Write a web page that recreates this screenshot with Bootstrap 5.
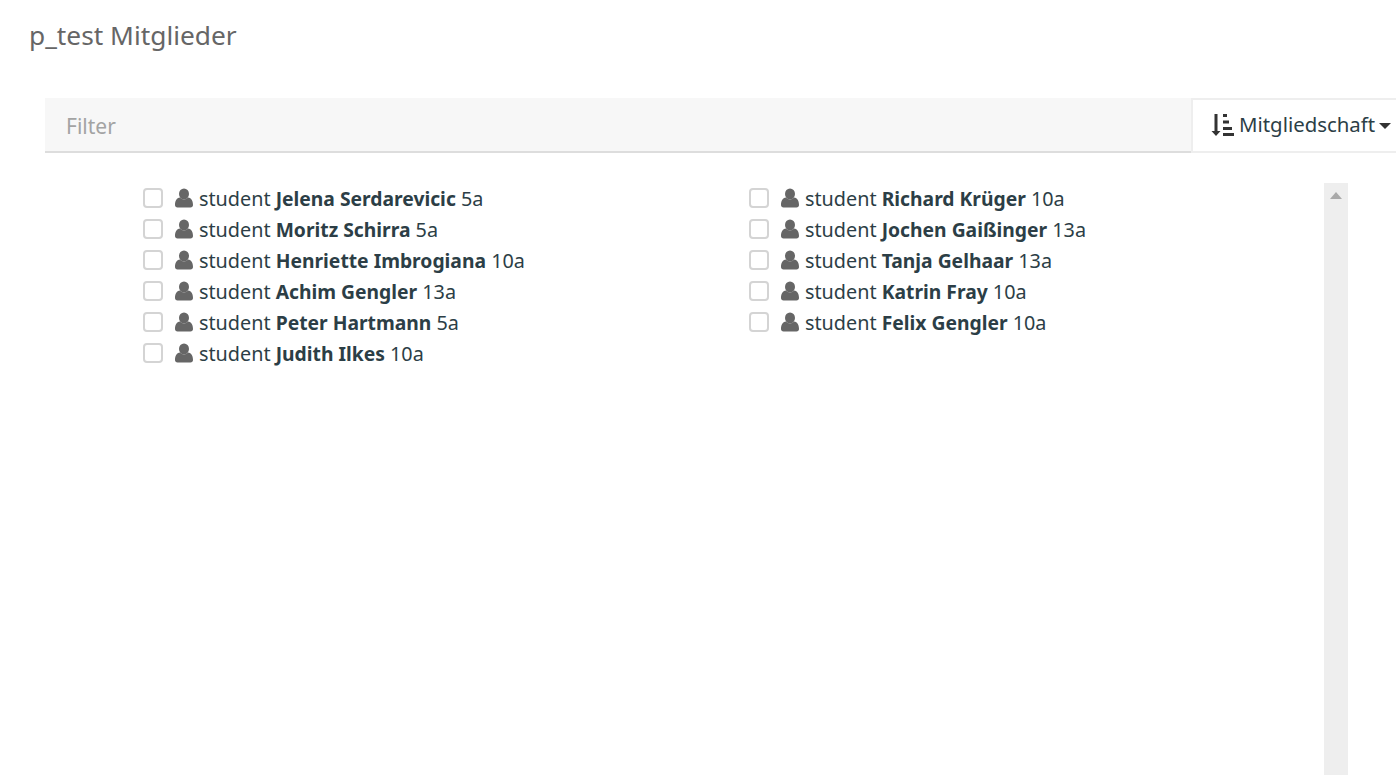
<!DOCTYPE html>
<html>
<head>
  <meta charset="UTF-8">
  <title>p_test Mitglieder</title>
  <link href="https://cdn.jsdelivr.net/npm/bootstrap@5.3.3/dist/css/bootstrap.min.css" rel="stylesheet">
  <style>
    html, body { height: 100%; overflow: hidden; }
    body { font-family: "Noto Sans", "Liberation Sans", sans-serif; background: #fff; color: #2c3e46; }
    .page-title { font-size: 26.300px; font-weight: 400; line-height: 36px; color: #666; margin: 0; padding: 17px 0 0 29px; }
    .filter-row { margin: 45px 0 0 45px; height: 55px; }
    .filter-input { flex: 1 1 auto; height: 55px; background: #f7f7f7; border: 0; border-bottom: 2px solid #ddd; padding: 2px 21px 0; font-size: 21px; color: #333; outline: 0; font-family: inherit; }
    .filter-input::placeholder { color: #a3a3a3; opacity: 1; }
    .sort-btn { width: 205px; flex: none; height: 55px; background: #fff; border: 2px solid #eee; border-right: 0; padding: 0 0 2px 18px; font-size: 20.400px; color: #2c3e46; white-space: nowrap; }
    .sort-caret { display: inline-block; margin-top: 2px; border-top: 6px solid #333; border-left: 6.500px solid transparent; border-right: 6.500px solid transparent; }
    .member-area { margin-top: 30px; padding-right: 48px; height: 600px; }
    .member-cols { flex: 1 1 auto; min-width: 0; padding: 0 0 0 143px; }
    .member-col { width: 606px; flex: none; }
    .member-row { height: 31px; font-size: 19.800px; line-height: 31px; white-space: nowrap; }
    .member-row b { font-weight: 700; font-size: 19.300px; }
    .member-check { width: 20px; height: 20px; border: 2px solid #d4d4d4; border-radius: 4px; background: #fff; appearance: none; margin: 0 12px 2px 0; flex: none; }
    .member-icon { width: 18px; height: 20px; margin: 0 6px 2px 0; flex: none; }
    .scroll-track { width: 24px; flex: none; background: #eee; padding-top: 9px; }
    .scroll-up { width: 0; height: 0; border-bottom: 7px solid #aaa; border-left: 6px solid transparent; border-right: 6px solid transparent; }
  </style>
</head>
<body>
  <h1 class="page-title">p_test Mitglieder</h1>

  <div class="filter-row d-flex">
    <input class="filter-input" placeholder="Filter">
    <button type="button" class="sort-btn d-flex align-items-center gap-1">
      <svg width="24" height="24" viewBox="0 0 24 24" fill="#333">
        <path d="M3.500 1h3v17h3l-4.500 5-4.500-5h3z"/>
        <rect x="12" y="1" width="4" height="3"/>
        <rect x="12" y="7.500" width="6" height="3"/>
        <rect x="12" y="14" width="9" height="3"/>
        <rect x="12" y="20" width="11" height="3"/>
      </svg>
      <span>Mitgliedschaft</span>
      <span class="sort-caret"></span>
    </button>
  </div>

  <div class="member-area d-flex">
    <div class="member-cols d-flex" id="member-cols"></div>
    <div class="scroll-track d-flex justify-content-center"><div class="scroll-up"></div></div>
  </div>

  <script src="https://cdn.jsdelivr.net/npm/bootstrap@5.3.3/dist/js/bootstrap.bundle.min.js"></script>
  <script>
    const columns = [
      [['Jelena Serdarevicic', '5a'], ['Moritz Schirra', '5a'], ['Henriette Imbrogiana', '10a'],
       ['Achim Gengler', '13a'], ['Peter Hartmann', '5a'], ['Judith Ilkes', '10a']],
      [['Richard Krüger', '10a'], ['Jochen Gaißinger', '13a'], ['Tanja Gelhaar', '13a'],
       ['Katrin Fray', '10a'], ['Felix Gengler', '10a']]
    ];
    const icon = '<svg class="member-icon" viewBox="0 0 18 20" fill="#666"><ellipse cx="9" cy="6" rx="5" ry="5.500"/><path d="M0 17c0-4 1.500-7 5-7.500 1 1.200 2.500 2 4 2s3-.8 4-2c3.500.5 5 3.500 5 7.500 0 1.500-1 2.500-2.500 2.500h-13C1 19.500 0 18.500 0 17z"/></svg>';
    const wrap = document.getElementById('member-cols');
    columns.forEach(col => {
      wrap.innerHTML += `<div class="member-col">` + col.map(m => `
        <div class="member-row d-flex align-items-center">
          <input type="checkbox" class="member-check">${icon}
          <span>student <b>${m[0]}</b> ${m[1]}</span>
        </div>`).join('') + `</div>`;
    });
  </script>
</body>
</html>
